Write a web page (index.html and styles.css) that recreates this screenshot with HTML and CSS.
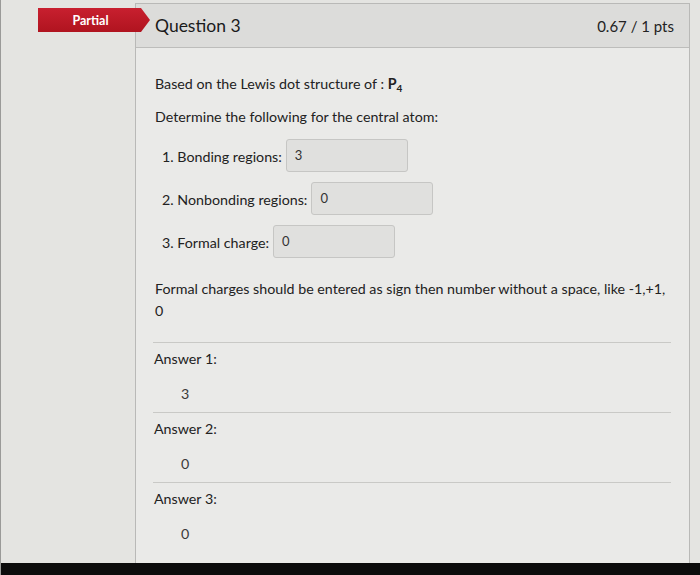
FILE: index.html
```html
<!DOCTYPE html>
<html lang="en">
<head>
<meta charset="utf-8">
<title>Question 3</title>
<link rel="stylesheet" href="styles.css">
</head>
<body>
<div class="screen">
  <div class="stage">
    <div class="gutter"></div>
    <section class="card">
      <header class="card-head">
        <h2 class="q-title">Question 3</h2>
        <span class="q-pts">0.67 / 1 pts</span>
      </header>
      <div class="card-body">
        <p class="q-line first">Based on the Lewis dot structure of : <b>P<sub>4</sub></b></p>
        <p class="q-line second">Determine the following for the central atom:</p>
        <div class="items">
          <div class="item"><span class="item-label">1. Bonding regions:</span><span class="blank">3</span></div>
          <div class="item"><span class="item-label">2. Nonbonding regions:</span><span class="blank">0</span></div>
          <div class="item"><span class="item-label">3. Formal charge:</span><span class="blank">0</span></div>
        </div>
        <p class="note">Formal charges should be entered as sign then number without a space, like -1,+1,<br>0</p>
        <div class="answers">
          <div class="answer"><div class="answer-label">Answer 1:</div><div class="answer-value">3</div></div>
          <div class="answer"><div class="answer-label">Answer 2:</div><div class="answer-value">0</div></div>
          <div class="answer"><div class="answer-label">Answer 3:</div><div class="answer-value">0</div></div>
        </div>
      </div>
    </section>
    <div class="badge">Partial</div>
  </div>
  <div class="bottom-bar"></div>
</div>
</body>
</html>
```
FILE: styles.css
```css
html, body {
  margin: 0;
  padding: 0;
}
body {
  font-family: Lato, "Open Sans", "Liberation Sans", sans-serif;
  color: #222;
  background: #e4e4e1;
}
.screen {
  width: 700px;
  height: 575px;
  display: flex;
  flex-direction: column;
  overflow: hidden;
  background: #e4e4e1;
  border-left: 1px solid #9a9a98;
  box-sizing: border-box;
}
.stage {
  position: relative;
  flex: 1;
  display: flex;
  padding-top: 3px;
  min-height: 0;
}
.gutter {
  width: 134px;
  flex: none;
}
.card {
  width: 555px;
  flex: none;
  box-sizing: border-box;
  border: 1px solid #b9b9b7;
  border-bottom: none;
  background: #eaeae8;
  display: flex;
  flex-direction: column;
}
.card-head {
  height: 43px;
  flex: none;
  display: flex;
  align-items: center;
  justify-content: space-between;
  padding: 0 15px 0 19px;
  background: #dcdcda;
  border-bottom: 1px solid #bdbdbb;
}
.q-title {
  margin: 0;
  font-size: 17.5px;
  font-weight: 400;
  color: #1a1a1a;
}
.q-pts {
  font-size: 15px;
  color: #222;
}
.card-body {
  padding: 26px 19px 0 19px;
  font-size: 14.25px;
}
.q-line {
  margin: 0;
  line-height: 20px;
}
.q-line b {
  font-weight: 700;
}
.q-line sub {
  font-size: 10px;
  vertical-align: -3px;
  line-height: 0;
}
.q-line.second {
  margin-top: 13px;
}
.items {
  margin-top: 12px;
  padding-left: 7px;
  display: flex;
  flex-direction: column;
  gap: 10px;
}
.item {
  display: flex;
  align-items: center;
  height: 33px;
}
.item-label {
  margin-right: 4px;
  position: relative;
  top: 1px;
}
.blank {
  width: 112px;
  height: 29px;
  padding: 0 0 2px 8px;
  border: 1px solid #c6c6c4;
  border-radius: 3px;
  background: #e0e0de;
  font-size: 13px;
  color: #333;
  display: flex;
  align-items: center;
}
.note {
  margin: 20px 0 0 0;
  line-height: 22px;
}
.answers {
  margin: 20px 0 0 -2px;
  width: 518px;
}
.answer {
  border-top: 1px solid #c9c9c6;
  padding: 6px 0 8px 1px;
}
.answer-label {
  line-height: 20px;
}
.answer-value {
  margin-top: 15px;
  line-height: 20px;
  padding-left: 27px;
  color: #3a3a3a;
}
.badge {
  position: absolute;
  left: 37px;
  top: 8px;
  width: 112px;
  height: 24px;
  padding: 0 9px 0 2px;
  box-sizing: border-box;
  background: linear-gradient(#c8202f, #b0141f);
  clip-path: polygon(0 0, 103px 0, 112px 50%, 103px 100%, 0 100%);
  color: #fff;
  font-size: 12.5px;
  font-weight: 700;
  display: flex;
  align-items: center;
  justify-content: center;
}
.bottom-bar {
  height: 12px;
  flex: none;
  background: #0c0c0c;
}
```
